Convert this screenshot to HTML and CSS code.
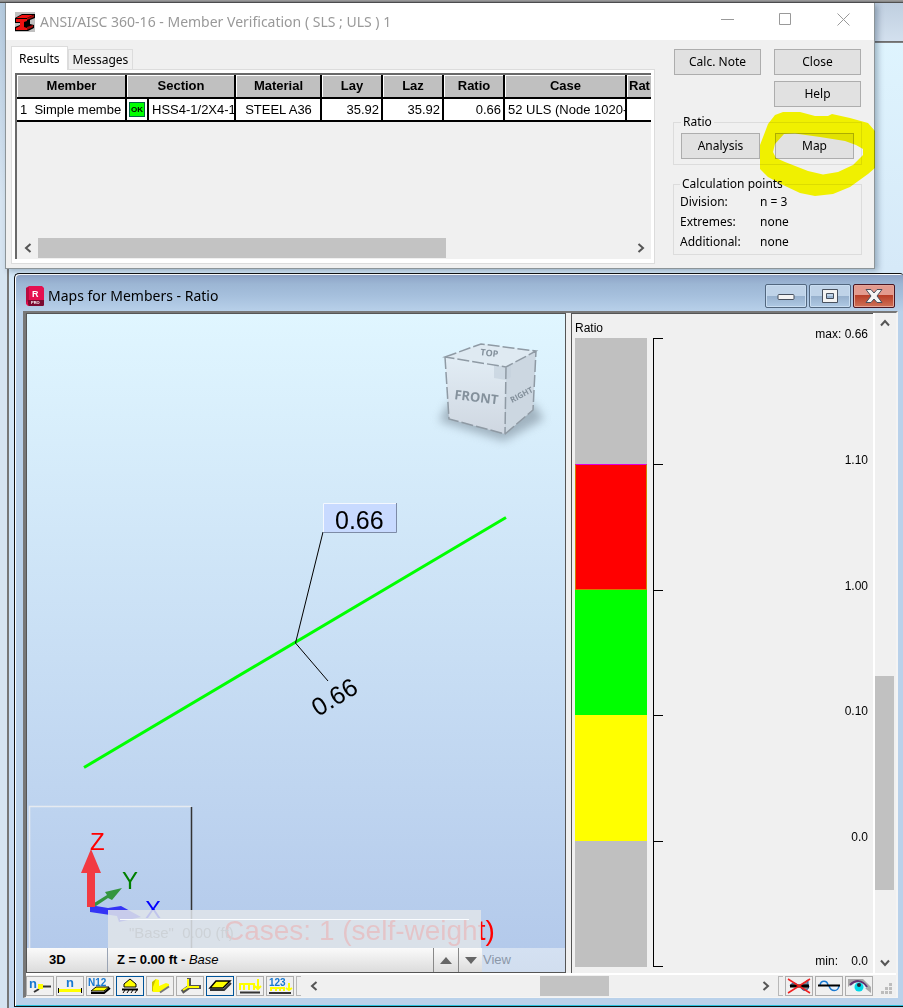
FILE: index.html
```html
<!DOCTYPE html>
<html lang="en">
<head>
<meta charset="utf-8">
<title>Member Verification</title>
<link rel="stylesheet" href="styles.css">
</head>
<body class="desktop">

<section class="dialog">
  <header class="dialog-title">
    <svg class="app-icon" width="20" height="20" viewBox="0 0 20 20"><rect width="20" height="20" fill="#c0c0c0"/><path d="M0 6l7-4h13v4l-5 2v4l4 1v3l-6 3H0v-4l5-2v-2H0z" fill="#000"/><path d="M1 6l6-3h11l-6 3zM1 7h11v2l-3 1v5l3 1v2H1v-2l4-2v-4H1z" fill="#f01010"/><path d="M12 6l7-3v2l-7 3zM12 15l6-2v2l-6 3z" fill="#a00808"/></svg>
    <h1 class="dialog-name">ANSI/AISC 360-16 - Member Verification ( SLS ; ULS ) 1</h1>
    <button class="caption" aria-label="Minimize"><svg width="13" height="13" viewBox="0 0 13 13"><path d="M0 6.500h13"/></svg></button>
    <button class="caption" aria-label="Maximize"><svg width="13" height="13" viewBox="0 0 13 13"><path d="M.5.5h11v11H.5z"/></svg></button>
    <button class="caption" aria-label="Close window"><svg width="13" height="13" viewBox="0 0 13 13"><path d="M.5.5l12 12M12.500.5l-12 12"/></svg></button>
  </header>

  <div class="dialog-body">
    <div class="tabs">
      <div class="tab-row">
        <button class="tab tab-on">Results</button>
        <button class="tab">Messages</button>
      </div>
      <div class="tab-page">
        <div class="grid-frame">
          <div class="grid-clip">
            <table class="results">
              <colgroup><col class="c-member"><col class="c-ok"><col class="c-section"><col class="c-material"><col class="c-num"><col class="c-num"><col class="c-num"><col class="c-case"><col class="c-last"></colgroup>
              <thead><tr><th>Member</th><th colspan="2">Section</th><th>Material</th><th>Lay</th><th>Laz</th><th>Ratio</th><th>Case</th><th class="cut">Rat</th></tr></thead>
              <tbody><tr><td>1&nbsp; Simple membe</td><td class="ok-cell"><span class="ok">OK</span></td><td>HSS4-1/2X4-1</td><td class="mid">STEEL A36</td><td class="num">35.92</td><td class="num">35.92</td><td class="num">0.66</td><td>52 ULS (Node 1020-</td><td></td></tr></tbody>
            </table>
          </div>
          <div class="hscroll">
            <button class="arrow" aria-label="Scroll left"><svg width="8" height="10" viewBox="0 0 8 10"><path d="M6.500 1L2 5l4.500 4"/></svg></button>
            <div class="track"><div class="thumb thumb-grid"></div></div>
            <button class="arrow" aria-label="Scroll right"><svg width="8" height="10" viewBox="0 0 8 10"><path d="M1.500 1L6 5 1.500 9"/></svg></button>
          </div>
        </div>
      </div>
    </div>

    <div class="side">
      <div class="side-buttons">
        <button class="btn">Calc. Note</button>
        <button class="btn">Close</button>
        <button class="btn btn-help">Help</button>
      </div>
      <fieldset class="group group-ratio">
        <legend>Ratio</legend>
        <div class="ratio-buttons">
          <button class="btn">Analysis</button>
          <button class="btn">Map</button>
        </div>
      </fieldset>
      <fieldset class="group group-points">
        <legend>Calculation points</legend>
        <dl class="points">
          <dt>Division:</dt><dd>n = 3</dd>
          <dt>Extremes:</dt><dd>none</dd>
          <dt>Additional:</dt><dd>none</dd>
        </dl>
      </fieldset>
    </div>
  </div>

  <svg class="marker" width="115" height="86" viewBox="760 111 115 86"><path fill="#ff0" fill-rule="evenodd" d="M768 124L775 115L783 112H800L815 116L828 116L832 114L850 118L868 123L875 131V168L868 174L850 187L833 194L815 196L800 193L783 185L768 177L760 169V145L765 132ZM773 152L776 158L785 162L808 171L823 174.500L838 172L853 165L863 155V149L856 145L845 141L820 137L795 133.500L784 134L775 144Z"/></svg>
</section>

<section class="maps">
  <header class="maps-title">
    <svg width="18" height="20" viewBox="0 0 18 20"><path d="M0 2l3-2h13l2 2v17l-1 1H2l-2-2z" fill="#e51050"/><path d="M0 2l3-1v13l-3 3z" fill="#b80b40"/><path d="M2 14h16v5l-1 1H3l-1-2z" fill="#7a0a30"/><text x="6" y="11" class="r-letter">R</text><text x="5" y="18" class="r-pro">PRO</text></svg>
    <h2 class="maps-name">Maps for Members - Ratio</h2>
    <div class="aero">
      <button class="aero-btn" aria-label="Minimize map"><svg width="18" height="16" viewBox="0 0 18 16"><rect x="1" y="6.500" width="16" height="5" rx="1"/></svg></button>
      <button class="aero-btn" aria-label="Maximize map"><svg width="18" height="16" viewBox="0 0 18 16"><path fill-rule="evenodd" d="M1.500 1.500h15v13h-15zM5.500 5.500v5h7v-5z"/></svg></button>
      <button class="aero-btn aero-close" aria-label="Close map"><svg width="18" height="16" viewBox="0 0 18 16"><path d="M1 1.500h5l3 3.500 3-3.500h5l-5 6.500 5 6.500h-5L9 11l-3 3.500H1L6 8z"/></svg></button>
    </div>
  </header>

  <div class="client">
    <div class="panes">
      <div class="view">
        <svg class="scene" viewBox="28 315 538 658" preserveAspectRatio="xMinYMin">
          <defs>
            <filter id="soft" x="-40%" y="-80%" width="180%" height="260%"><feGaussianBlur stdDeviation="5"/></filter>
            <linearGradient id="face" x1="0" y1="0" x2="0" y2="1"><stop offset="0" stop-color="#e2edf5"/><stop offset="1" stop-color="#cfd7e1"/></linearGradient>
          </defs>
          <path d="M440 422L505 442L545 420L534 404H450z" fill="#7b8b98" opacity=".6" filter="url(#soft)"/>
          <path d="M446 358L482 345L537 352L507 368z" fill="#dfeaf2"/>
          <path d="M446 358L507 368L506 435L450 420z" fill="url(#face)"/>
          <path d="M507 368L537 352L534 411L506 435z" fill="#ccd7e1"/>
          <path d="M495 366l12 2 5-3v13l-5 3-12-2z" fill="#c4d2dd" opacity=".7"/>
          <path class="edges" d="M446 358L482 345L537 352L507 368zM446 358L450 420L506 435L534 411L537 352M507 368L506 435"/>
          <text class="face-name" x="455" y="400" font-size="13" transform="rotate(7 455 400)">FRONT</text>
          <text class="face-name" x="513" y="404" font-size="8" transform="rotate(-28 513 404)">RIGHT</text>
          <text class="face-name" x="481" y="356" font-size="9" transform="rotate(7 481 356)">TOP</text>
          <path d="M85 768.500L507 518.500" stroke="#0f0" stroke-width="3"/>
          <path d="M324 533L296.500 644L329 682" fill="none" stroke="#000"/>
          <rect x="324" y="504" width="73" height="30" fill="#c8daff"/>
          <path d="M324.500 533V504.500H397" fill="none" stroke="#f4f8ff"/>
          <path d="M324 533.500H397.500V504" fill="none" stroke="#7d8ba6"/>
          <text class="value" x="336" y="530">0.66</text>
          <text class="value" x="319" y="718" transform="rotate(-31 319 718)">0.66</text>
        </svg>
        <svg class="axes" viewBox="28 806 538 143" preserveAspectRatio="xMinYMax">
          <path d="M30.500 949V807.500H192" fill="none" stroke="#e6eaf0" stroke-width="1.500"/>
          <path d="M192.500 808V949" stroke="#333" stroke-width="1.500"/>
          <path d="M91 906l18 3 13-2 20 11-22 5-2-6-27-4z" fill="#3434f5"/>
          <path d="M92 906l16-10-2-3 17-4-10 12-4-2-12 8z" fill="#35963f"/>
          <path d="M88 908V874h-6l10-24 10 24h-6v34z" fill="#f23a42"/>
          <text x="91" y="851" class="axis" fill="#f00">Z</text>
          <text x="123" y="890" class="axis" fill="#008000">Y</text>
          <text x="146" y="919" class="axis" fill="#00f">X</text>
          <text x="225" y="941" class="cases">Cases: 1 (self-weight)</text>
          <rect x="109" y="911" width="373" height="38" fill="#e0e4e9" opacity=".86"/>
          <path d="M121 920.500H470" stroke="#fafcff"/>
          <text x="130" y="939" class="ghost">"Base"&#160; 0.00 (ft)</text>
        </svg>
        <div class="status">
          <span class="status-mode">3D</span>
          <span class="status-level"><b>Z = 0.00 ft -</b> <i>Base</i></span>
          <button class="spin" aria-label="Level up"><svg width="12" height="7" viewBox="0 0 12 7"><path d="M6 0l6 7H0z"/></svg></button>
          <button class="spin" aria-label="Level down"><svg width="12" height="7" viewBox="0 0 12 7"><path d="M6 7l6-7H0z"/></svg></button>
          <span class="status-view">View</span>
        </div>
      </div>

      <div class="legend-pane">
        <h3 class="legend-name">Ratio</h3>
        <div class="scale">
          <div class="band gray"></div><div class="range"><span>max: 0.66</span></div>
          <div class="band red"></div><div class="range"><span>1.10</span></div>
          <div class="band green"></div><div class="range"><span>1.00</span></div>
          <div class="band yellow"></div><div class="range"><span>0.10</span></div>
          <div class="band gray"></div><div class="range range-last"><span>0.0</span><span class="bottom">min: &nbsp;&nbsp; 0.0</span></div>
        </div>
      </div>

      <div class="vscroll">
        <button class="arrow" aria-label="Scroll up"><svg width="10" height="8" viewBox="0 0 10 8"><path d="M1 6.500L5 2l4 4.500"/></svg></button>
        <div class="vtrack"><div class="vthumb"></div></div>
        <button class="arrow" aria-label="Scroll down"><svg width="10" height="8" viewBox="0 0 10 8"><path d="M1 1.500L5 6l4-4.500"/></svg></button>
      </div>
    </div>

    <div class="toolbar">
      <button class="tool" aria-label="Node numbers"><svg viewBox="0 0 24 16"><text x="1" y="10" class="n">n</text><path d="M6 14l5-3M14 8.500h9" stroke="#333" stroke-width="2"/><rect x="10" y="6" width="5" height="5" fill="#ff0"/></svg></button>
      <button class="tool" aria-label="Bar numbers"><svg viewBox="0 0 24 16"><text x="8" y="9" class="n">n</text><path d="M0 12.500h24" stroke="#ff0" stroke-width="3"/><path d="M.5 10v5M23.500 10v5" stroke="#000"/></svg></button>
      <button class="tool" aria-label="Panel numbers"><svg viewBox="0 0 24 16"><text x="0" y="8" class="n-small">N12</text><path d="M8 9h13l-5 4H3z" fill="#ff0" stroke="#000"/><path d="M3 15h13l6-5" fill="none" stroke="#000" stroke-width="2"/></svg></button>
      <button class="tool tool-on" aria-label="Supports"><svg viewBox="0 0 24 16"><path d="M12 1l6 5v3H6V6z" fill="#ff0" stroke="#000"/><path d="M4 11.500h16" stroke="#000" stroke-width="2"/><path d="M5 15l2-3M9 15l2-3M13 15l2-3M17 15l2-3" stroke="#000"/></svg></button>
      <button class="tool" aria-label="Section shape"><svg viewBox="0 0 24 16"><path d="M4 4l4-3v8l-4 5z" fill="#c8c000"/><path d="M8 1l3 1v6l7-3 3 1v2l-9 6H5V9z" fill="#ff0"/><path d="M12 14.500l9-6" stroke="#777" stroke-width="2"/></svg></button>
      <button class="tool" aria-label="Local axes"><svg viewBox="0 0 24 16"><path d="M11 0v9H23M11 9l-7 5" fill="none" stroke="#555" stroke-width="4"/><path d="M10 1v8h11M10 9l-5 3" fill="none" stroke="#ff0" stroke-width="2"/></svg></button>
      <button class="tool tool-on" aria-label="Panels"><svg viewBox="0 0 24 16"><path d="M8 3h14l-7 7H2z" fill="#ff0" stroke="#000" stroke-width="1.500"/><path d="M2 12h14l7-7" fill="none" stroke="#333" stroke-width="2"/></svg></button>
      <button class="tool" aria-label="Loads"><svg viewBox="0 0 24 16"><path d="M2 12V6h14v6M6 6v6M11 6v6M20 1v10M17 8l3 3 3-3" fill="none" stroke="#ff0" stroke-width="2"/><path d="M2 14.500h20" stroke="#333" stroke-width="2"/></svg></button>
      <button class="tool" aria-label="Load values"><svg viewBox="0 0 24 16"><text x="1" y="8" class="n-small">123</text><path d="M3 13v-3h13v3M8 10v3M12 10v3M21 5v7M18 10l3 2 3-2" fill="none" stroke="#ff0" stroke-width="2"/><path d="M1 15h22" stroke="#333" stroke-width="2"/></svg></button>
      <span class="handle"></span>
      <div class="hscroll hscroll-map">
        <button class="arrow" aria-label="Map scroll left"><svg width="8" height="10" viewBox="0 0 8 10"><path d="M6.500 1L2 5l4.500 4"/></svg></button>
        <div class="track"><div class="thumb thumb-map"></div></div>
        <button class="arrow" aria-label="Map scroll right"><svg width="8" height="10" viewBox="0 0 8 10"><path d="M1.500 1L6 5 1.500 9"/></svg></button>
      </div>
      <span class="handle"></span>
      <button class="tool" aria-label="Hide diagrams"><svg viewBox="0 0 24 16"><path d="M3 8c2-4 6-4 8 0zM13 8c2 6 8 6 9 0zM14 7l7-5v5z" fill="#888" stroke="#1858a8"/><path d="M3 8h19" stroke="#000" stroke-width="3"/><path d="M1 1l22 14M23 1L1 15" stroke="#f02020" stroke-width="1.500"/></svg></button>
      <button class="tool" aria-label="Diagrams"><svg viewBox="0 0 24 16"><path d="M3 7c1-5 7-5 8 0M12 8c2 6 9 6 10 0" fill="#e8f0f8" stroke="#1878d0" stroke-width="1.500"/><path d="M1 7.500h22" stroke="#000" stroke-width="2"/></svg></button>
      <button class="tool" aria-label="Display"><svg viewBox="0 0 24 16"><path d="M1 1h15l8 8v6l-5-4L8 3 1 9z" fill="#a8a8a8"/><path d="M4 8c4-5 11-5 16 1-4 5-11 5-16-1z" fill="#d8f8f8"/><circle cx="12" cy="9" r="4.500" fill="#00d8e8"/><circle cx="12" cy="7" r="2" fill="#223"/><path d="M3 7c5-5 12-6 17 2" fill="none" stroke="#603070" stroke-width="2"/></svg></button>
      <svg class="grip" width="12" height="12" viewBox="0 0 12 12"><path d="M8 0h3v3H8zM4 4h3v3H4zM8 4h3v3H8zM0 8h3v3H0zM4 8h3v3H4zM8 8h3v3H8z" fill="#bdbdbd"/></svg>
    </div>
  </div>
</section>

</body>
</html>
```
FILE: styles.css
```css
* { box-sizing: border-box; }

.desktop {
  margin: 0;
  padding-top: 3px;
  min-height: 100vh;
  display: flex;
  flex-direction: column;
  gap: 4px;
  font: 12px/16px "Noto Sans", sans-serif;
  color: #000;
  background:
    linear-gradient(#999 0 1px, #888 1px 2px, #505050 2px 3px) 0 0 / 100% 3px no-repeat,
    linear-gradient(#c0cfe0, #d3e0ee) 100% 3px / 40px 38px no-repeat,
    linear-gradient(#666, #888) 100% 41px / 40px 2px no-repeat,
    linear-gradient(#777, #777) 7px 0 / 2px 100% no-repeat,
    linear-gradient(#b4cade, #d6e4f1 200px) 0 0 / 7px 100% no-repeat,
    linear-gradient(#e0f6ff, #d6e9f8 270px, #c4d8f0);
}

button {
  font: inherit;
  color: inherit;
  padding: 0;
  border: 0;
  background: none;
}

h1, h2, h3 { margin: 0; font-weight: 400; }

/* Verification dialog */
.dialog {
  position: relative;
  margin: 0 28px 0 5px;
  height: 266px;
  background: #f0f0f0;
  border: 1px solid #8c9498;
  border-top: 0;
  box-shadow: 3px 2px 6px rgba(0, 30, 60, .3);
  display: flex;
  flex-direction: column;
}

.dialog-title {
  display: flex;
  align-items: center;
  height: 37px;
  padding: 0 2px 0 9px;
  background: #fff;
  color: #999;
}

.dialog-name {
  flex: 1;
  padding-left: 5px;
  font: 14px/20px "Noto Sans", sans-serif;
  white-space: nowrap;
}

.caption { width: 58px; height: 36px; }
.caption svg { fill: none; stroke: #999; }

.dialog-body {
  flex: 1;
  display: flex;
  gap: 18px;
  padding: 6px 12px 4px 5px;
}

.tabs { flex: 1; min-width: 0; display: flex; flex-direction: column; }
.tab-row { display: flex; align-items: flex-end; height: 23px; }
.tab { height: 20px; padding: 0 4px; border: 1px solid #dcdcdc; border-bottom: 0; }
.tab-on { height: 24px; padding: 0 7px; background: #fff; margin-bottom: -1px; position: relative; }

.tab-page { flex: 1; background: #fff; border: 1px solid #dcdcdc; padding: 3px 3px 4px; display: flex; }

.grid-frame {
  flex: 1;
  min-width: 0;
  display: flex;
  flex-direction: column;
  background: #f0f0f0;
  border-top: 2px solid #696969;
  border-left: 2px solid #696969;
}
.grid-clip { flex: 1; overflow: hidden; }

.results {
  table-layout: fixed;
  width: 680px;
  border-collapse: collapse;
  font: 13px/20px "Liberation Sans", sans-serif;
}
.c-member { width: 109px; }
.c-ok { width: 22px; }
.c-section { width: 87px; }
.c-material { width: 86px; }
.c-num { width: 61px; }
.c-case { width: 122px; }
.c-last { width: 71px; }

.results th, .results td {
  height: 23px;
  padding: 0 2px 0 3px;
  border-right: 2px solid #000;
  border-bottom: 2px solid #000;
  white-space: nowrap;
  overflow: hidden;
  text-align: left;
  font-weight: 400;
  background: #fff;
}
.results th { background: #c0c0c0; text-align: center; font-weight: 700; box-shadow: inset 1px 1px #fff; }
.results th.cut { text-align: left; padding-left: 2px; }
.results td.num { text-align: right; }
.results td.mid { text-align: center; }
.results td.ok-cell { padding: 0 2px; }
.ok {
  display: block;
  height: 15px;
  border: 1px solid #064;
  background: #0f0;
  font: bold 8px/13px "Liberation Sans", sans-serif;
  text-align: center;
}

.hscroll { display: flex; height: 22px; }
.arrow { width: 21px; display: grid; place-items: center; }
.arrow svg { fill: none; stroke: #555; stroke-width: 2; }
.track { flex: 1; padding: 1px 0; display: flex; }
.thumb { background: #c3c3c3; }
.thumb-grid { width: 69%; }
.thumb-map { width: 69px; margin-left: 50%; }

.side { width: 189px; display: flex; flex-direction: column; }
.side-buttons { display: grid; grid-template-columns: 87px 87px; justify-content: space-between; row-gap: 6px; padding: 3px 1px 0 1px; }
.btn { height: 26px; background: #e1e1e1; border: 1px solid #adadad; }
.btn-help { grid-column: 2; }

.group { margin: 0; padding: 0 7px; border: 1px solid #dcdcdc; }
.group legend { padding: 0 2px; line-height: 16px; }
.group-ratio { margin-top: 7px; height: 51px; }
.ratio-buttons { display: grid; grid-template-columns: 79px 79px; justify-content: space-between; padding-top: 3px; }
.group-points { margin-top: 11px; height: 79px; padding: 0 6px; }
.points { margin: 0; display: grid; grid-template-columns: 80px 1fr; line-height: 20px; }
.points dd { margin: 0; }

.marker { position: absolute; top: 108px; right: -1px; mix-blend-mode: multiply; pointer-events: none; }

/* Map window */
.maps {
  flex: 1;
  margin: 0 0 1px 14px;
  display: flex;
  flex-direction: column;
  padding: 0 5px 8px 8px;
  border: 1px solid #101010;
  border-right: 0;
  border-radius: 5px 3px 0 0;
  background: linear-gradient(#8ba0c4, #9cb6d4 10px, #a6c0dd 22px, #b9d1ea 38px);
  box-shadow: inset 1px 1px #fff, inset 0 -1px #28c0dc;
}

.maps-title { display: flex; align-items: center; height: 37px; padding: 6px 3px 0 3px; }
.maps-name { flex: 1; padding-left: 4px; font: 14px/20px "Noto Sans", sans-serif; }
.r-letter { font: bold 9px "Liberation Sans", sans-serif; fill: #fff; }
.r-pro { font: bold 4px "Liberation Sans", sans-serif; fill: #fff; }

.aero { display: flex; gap: 2px; }
.aero-btn {
  width: 42px;
  height: 24px;
  display: grid;
  place-items: center;
  border: 1px solid #52677f;
  border-radius: 2px;
  background: linear-gradient(#bfd3e8 50%, #96b0cd 50%, #afc9e4);
  box-shadow: inset 0 0 0 1px #c9ddf1;
}
.aero-btn svg { fill: #f4f4f4; stroke: #47505e; }
.aero-close {
  border-color: #4b1622;
  background: linear-gradient(#e39a8e 45%, #b73b25 45%, #cf7258);
  box-shadow: inset 0 0 0 1px #e5a698;
}

.client {
  flex: 1;
  display: flex;
  flex-direction: column;
  border: solid #777;
  border-width: 2px 2px 1px 3px;
  border-right-color: #f4f4f4;
  border-bottom-color: #f4f4f4;
  background: #f0f0f0;
}

.panes { flex: 1; display: grid; grid-template-columns: minmax(0, 1fr) 302px 23px; }

.view {
  position: relative;
  display: flex;
  flex-direction: column;
  justify-content: flex-end;
  border: 1px solid #555;
  margin-right: 5px;
  background: linear-gradient(#e0f6ff, #b2c8ea);
  overflow: hidden;
}
.scene { position: absolute; left: 0; top: 0; width: 538px; height: 658px; }
.axes { position: absolute; left: 0; bottom: 24px; width: 538px; height: 143px; }
.edges { fill: none; stroke: #8f9aa4; stroke-width: 1.500px; stroke-dasharray: 12 3; }
.face-name { font-family: "Open Sans", sans-serif; font-weight: 700; fill: #84919c; }
.value { font: 25px "Liberation Sans", sans-serif; }
.axis { font: 24px "Liberation Sans", sans-serif; }
.cases { font: 28px "Liberation Sans", sans-serif; fill: #f00; }
.ghost { font: 15px "Liberation Sans", sans-serif; fill: #cdd2d7; }

.status {
  position: relative;
  display: flex;
  height: 24px;
  font: 13px/24px "Liberation Sans", sans-serif;
  background: linear-gradient(90deg, rgba(255,255,255,0) 0 455px, rgba(208,222,241,.9) 455px), linear-gradient(#fafafa, #dcdcdc);
}
.status-mode { width: 81px; padding-left: 22px; border-right: 1px solid #9aa4b4; font-weight: 700; }
.status-level { width: 325px; padding-left: 9px; }
.spin { width: 25px; border-left: 1px solid #888; display: grid; place-items: center; }
.spin svg { fill: #666; }
.status-view { color: #8b97a8; }

.legend-pane {
  display: flex;
  flex-direction: column;
  padding: 6px 5px 6px 3px;
  border: 1px solid #555;
  border-width: 1px 0 0 1px;
  box-shadow: 0 1px #fff;
  font: 12px/16px "Liberation Sans", sans-serif;
}
.legend-name { font: inherit; padding-bottom: 2px; }
.scale { flex: 1; display: grid; grid-template-columns: 72px 1fr; grid-template-rows: repeat(5, 1fr); column-gap: 6px; }
.gray { background: #c0c0c0; }
.red { background: #f00; border: 1px solid #d08000; border-top-color: #e000e0; }
.green { background: #0f0; }
.yellow { background: #ff0; }
.range {
  display: flex;
  flex-direction: column;
  align-items: flex-end;
  justify-content: space-between;
  background: linear-gradient(#000, #000) 0 0 / 1px 100% no-repeat, linear-gradient(#000, #000) 0 0 / 10px 1px no-repeat;
}
.range-last { background: linear-gradient(#000, #000) 0 0 / 1px 100% no-repeat, linear-gradient(#000, #000) 0 0 / 10px 1px no-repeat, linear-gradient(#000, #000) 0 100% / 10px 1px no-repeat; }
.range span { margin-top: -12px; }
.range .bottom { margin: 0 0 -2px; }

.vscroll { display: grid; grid-template-rows: 20px 1fr 20px; border-left: 2px solid #fff; }
.vscroll .arrow { width: 19px; }
.vtrack { display: flex; flex-direction: column; justify-content: flex-end; padding-bottom: 63px; width: 19px; }
.vthumb { height: 214px; background: #c1c1c1; }

.toolbar { display: flex; align-items: center; gap: 2px; height: 24px; border-top: 2px solid #fff; }
.tool { width: 28px; height: 20px; padding: 1px; border: 1px solid #adadad; display: grid; place-items: center; flex: none; }
.tool svg { width: 24px; height: 16px; overflow: visible; }
.tool-on { border-color: #005499; }
.n { font: bold 13px "Liberation Sans", sans-serif; fill: #1878d0; }
.n-small { font: bold 10px "Liberation Sans", sans-serif; fill: #1878d0; }
.handle { width: 5px; height: 20px; border: 1px solid #b8b8b8; border-right: 0; flex: none; }
.hscroll-map { flex: 1; }
.grip { margin: 6px 3px 0 6px; flex: none; }
```
